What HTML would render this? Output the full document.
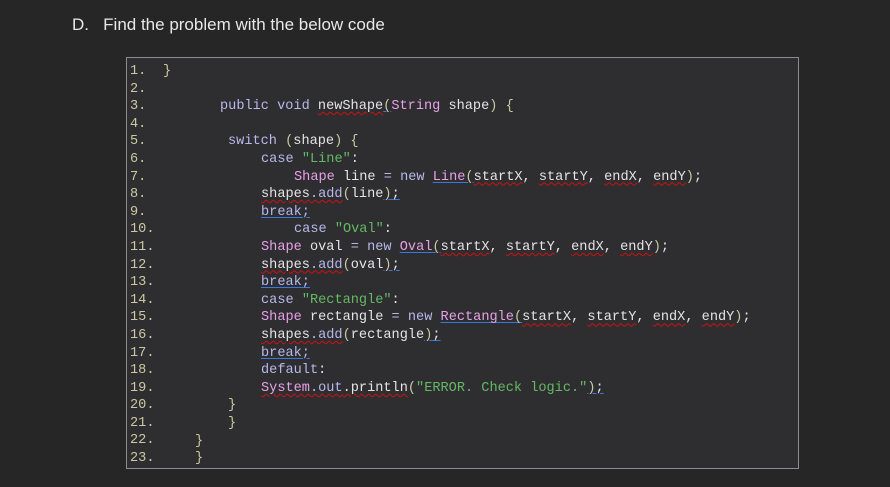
<!DOCTYPE html>
<html><head><meta charset="utf-8"><style>
html,body{margin:0;padding:0;}
body{width:890px;height:486px;background:#262626;position:relative;overflow:hidden;font-family:"Liberation Sans",sans-serif;}
.t{position:absolute;left:72px;top:15px;color:#e8e8e8;font-size:17px;white-space:pre;}
.box{position:absolute;left:126px;top:57px;width:671px;height:410px;background:#2e2e31;border:1px solid #8c8c8c;}
.w{position:absolute;left:0;top:1px;width:890px;height:486px;}
.l{position:absolute;font-family:"Liberation Mono",monospace;font-size:13.6px;line-height:17.6px;white-space:pre;color:#e4e4e4;}
.n{color:#c9c9a3;}
.k{color:#b8b8ec;}
.p{color:#e8a0e8;}
.s{color:#64b864;}
.b{color:#c9c9a3;}
.r{text-decoration:underline wavy #d01010;text-decoration-thickness:1px;text-underline-offset:2px;}
.u{text-decoration:underline solid #3a78e0;text-underline-offset:2px;}
</style></head><body>
<div class="t">D.   Find the problem with the below code</div>
<div class="box"></div>
<div class="w">
<div class="l n" style="left:130px;top:62px">1.
2.
3.
4.
5.
6.
7.
8.
9.
10.
11.
12.
13.
14.
15.
16.
17.
18.
19.
20.
21.
22.
23.</div>
<div class="l" style="left:163px;top:62px"><span class="b">}</span></div>
<div class="l" style="left:220px;top:97.2px"><span class="k">public void</span> <span class="r">newShape</span><span class="b u">(</span><span class="p">String</span> shape<span class="b">) {</span></div>
<div class="l" style="left:228px;top:132.4px"><span class="k">switch</span> <span class="b">(</span>shape<span class="b">) {</span></div>
<div class="l" style="left:261px;top:150px"><span class="k">case</span> <span class="s">"Line"</span>:</div>
<div class="l" style="left:294px;top:167.6px"><span class="p">Shape</span> line <span class="k">=</span> <span class="k">new</span> <span class="p u">Line</span><span class="b u">(</span><span class="r">startX</span>, <span class="r">startY</span>, <span class="r">endX</span>, <span class="r">endY</span><span class="b">)</span>;</div>
<div class="l" style="left:261px;top:185.2px"><span class="r">shapes<span class="k">.add</span></span><span class="b">(</span>line<span class="b u">)</span><span class="u">;</span></div>
<div class="l" style="left:261px;top:202.8px"><span class="k u">break;</span></div>
<div class="l" style="left:294px;top:220.4px"><span class="k">case</span> <span class="s">"Oval"</span>:</div>
<div class="l" style="left:261px;top:238px"><span class="p">Shape</span> oval <span class="k">=</span> <span class="k">new</span> <span class="p u">Oval</span><span class="b u">(</span><span class="r">startX</span>, <span class="r">startY</span>, <span class="r">endX</span>, <span class="r">endY</span><span class="b">)</span>;</div>
<div class="l" style="left:261px;top:255.6px"><span class="r">shapes<span class="k">.add</span></span><span class="b">(</span>oval<span class="b u">)</span><span class="u">;</span></div>
<div class="l" style="left:261px;top:273.2px"><span class="k u">break;</span></div>
<div class="l" style="left:261px;top:290.8px"><span class="k">case</span> <span class="s">"Rectangle"</span>:</div>
<div class="l" style="left:261px;top:308.4px"><span class="p">Shape</span> rectangle <span class="k">=</span> <span class="k">new</span> <span class="p u">Rectangle</span><span class="b u">(</span><span class="r">startX</span>, <span class="r">startY</span>, <span class="r">endX</span>, <span class="r">endY</span><span class="b">)</span>;</div>
<div class="l" style="left:261px;top:326px"><span class="r">shapes<span class="k">.add</span></span><span class="b">(</span>rectangle<span class="b u">)</span><span class="u">;</span></div>
<div class="l" style="left:261px;top:343.6px"><span class="k u">break;</span></div>
<div class="l" style="left:261px;top:361.2px"><span class="k">default</span>:</div>
<div class="l" style="left:261px;top:378.8px"><span class="r"><span class="p">System</span><span class="k">.out</span>.println</span><span class="b">(</span><span class="s">"ERROR. Check logic."</span><span class="b u">)</span><span class="u">;</span></div>
<div class="l" style="left:228px;top:396.4px"><span class="b">}</span></div>
<div class="l" style="left:228px;top:414px"><span class="b">}</span></div>
<div class="l" style="left:195px;top:431.6px"><span class="b">}</span></div>
<div class="l" style="left:195px;top:449.2px"><span class="b">}</span></div>
</div>
</body></html>
